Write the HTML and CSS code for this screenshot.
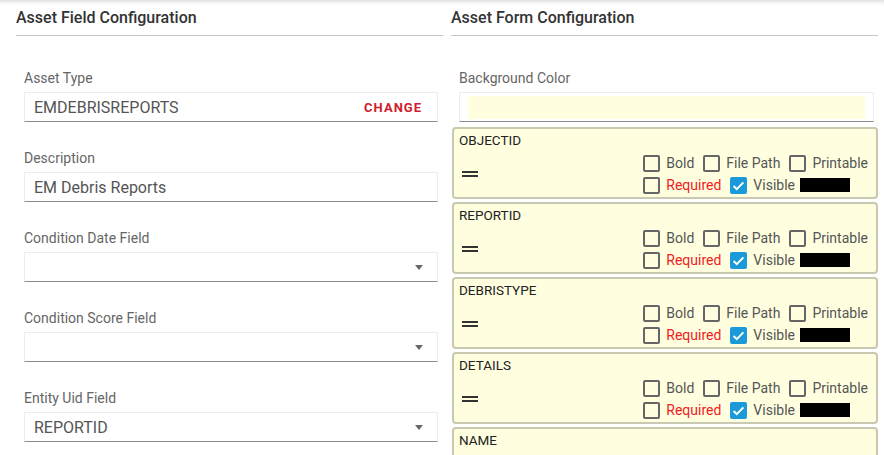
FILE: index.html
```html
<!DOCTYPE html>
<html lang="en">
<head>
  <meta charset="UTF-8" />
  <meta name="viewport" content="width=device-width, initial-scale=1.0" />
  <title>Asset Configuration</title>
  <link rel="stylesheet" href="styles.css">
</head>
<body>
  <div class="page">
    <section class="column">
      <h2 class="heading">Asset Field Configuration</h2>
      <div class="fields">
        <div class="field">
          <label>Asset Type</label>
          <div class="input">
            <span>EMDEBRISREPORTS</span>
            <span class="change">CHANGE</span>
          </div>
        </div>
        <div class="field">
          <label>Description</label>
          <div class="input"><span>EM Debris Reports</span></div>
        </div>
        <div class="field">
          <label>Condition Date Field</label>
          <div class="input select"><span></span><i class="caret"></i></div>
        </div>
        <div class="field">
          <label>Condition Score Field</label>
          <div class="input select"><span></span><i class="caret"></i></div>
        </div>
        <div class="field">
          <label>Entity Uid Field</label>
          <div class="input select"><span>REPORTID</span><i class="caret"></i></div>
        </div>
      </div>
    </section>

    <section class="column">
      <h2 class="heading">Asset Form Configuration</h2>
      <div class="fields">
        <div class="field">
          <label>Background Color</label>
          <div class="input color"><div class="swatch"></div></div>
        </div>
      </div>
      <div class="cards" id="cards"></div>
    </section>
  </div>

  <script>
    const names = ['OBJECTID', 'REPORTID', 'DEBRISTYPE', 'DETAILS', 'NAME'];
    const box = (checked) => checked
      ? '<span class="box checked"><svg viewBox="0 0 17 17" width="17" height="17"><path d="M3.6 9l3.2 3.2L13.4 5.4" fill="none" stroke="#fff" stroke-width="2"/></svg></span>'
      : '<span class="box"></span>';
    const opt = (text, checked, cls) =>
      `<span class="opt">${box(checked)}<span class="${cls || ''}">${text}</span></span>`;

    document.getElementById('cards').innerHTML = names.map(n => `
      <div class="card">
        <div class="card-title">${n}</div>
        <div class="card-body">
          <span class="drag"></span>
          <div class="opts">
            <div class="row">${opt('Bold')}${opt('File Path')}${opt('Printable')}</div>
            <div class="row">${opt('Required', false, 'req')}${opt('Visible', true)}<span class="colorbox"></span></div>
          </div>
        </div>
      </div>`).join('');
  </script>
</body>
</html>
```

FILE: styles.css
```css
body {
  margin: 0;
  font-family: Roboto, 'Liberation Sans', sans-serif;
  background: #fff;
  color: #333;
}
.page {
  display: grid;
  grid-template-columns: 427px 427px;
  gap: 8px;
  padding: 0 6px 0 16px;
  height: 455px;
  overflow: hidden;
  box-shadow: inset 0 5px 5px -4px rgba(0, 0, 0, 0.18);
}
.heading {
  margin: 0;
  font-size: 16px;
  font-weight: 500;
  line-height: 18px;
  padding: 9px 0 8px 0;
  color: #333;
  border-bottom: 1px solid #c8c8c8;
}
.fields {
  padding: 32px 5px 0 8px;
}
.field {
  margin-bottom: 26px;
}
.field label {
  display: block;
  font-size: 14px;
  line-height: 20px;
  color: #666;
  margin-bottom: 4px;
}
.input {
  display: flex;
  align-items: center;
  justify-content: space-between;
  box-sizing: border-box;
  height: 30px;
  padding: 0 15px 0 9px;
  border: 1px solid #ececec;
  border-bottom: 1px solid #8c8c96;
  font-size: 16px;
  color: #555;
}
.change {
  font-size: 13px;
  font-weight: 700;
  letter-spacing: 1px;
  color: #d02030;
}
.select {
  padding-right: 14px;
}
.caret {
  width: 0;
  height: 0;
  border-left: 4.5px solid transparent;
  border-right: 4.5px solid transparent;
  border-top: 5px solid #666;
}
.color {
  padding: 3px 8px 2px 8px;
  align-items: stretch;
}
.swatch {
  flex: 1;
  background: #ffffe0;
}
.column:last-child .fields {
  padding-right: 4px;
}
.column:last-child .field {
  margin-bottom: 0;
}
.cards {
  margin: 5px 0 0 1px;
}
.card {
  background: #ffffe0;
  border: 2px solid #c9c9b1;
  border-radius: 4px;
  padding: 3px 8px 1px 5px;
  margin-bottom: 3px;
}
.card-title {
  font-size: 13.5px;
  line-height: 16px;
  color: #222;
}
.card-body {
  display: flex;
  align-items: center;
  margin-top: 4px;
}
.drag {
  width: 16px;
  height: 6px;
  margin-left: 3px;
  border-top: 2px solid #333;
  border-bottom: 2px solid #333;
  box-sizing: border-box;
}
.opts {
  margin-left: auto;
}
.row {
  display: flex;
  align-items: center;
  height: 22px;
}
.opt {
  display: flex;
  align-items: center;
  gap: 6px;
  margin-right: 9px;
  font-size: 14px;
  color: #555;
}
.row .opt:last-child {
  margin-right: 0;
}
.box {
  width: 17px;
  height: 17px;
  box-sizing: border-box;
  border: 2px solid #666;
  border-radius: 2px;
  display: inline-block;
}
.box.checked {
  border: none;
  background: #1a9ad8;
}
.box svg {
  display: block;
}
.req {
  color: #f02020;
}
.colorbox {
  width: 50px;
  height: 14px;
  background: #000;
  margin-left: -4px;
}
```
